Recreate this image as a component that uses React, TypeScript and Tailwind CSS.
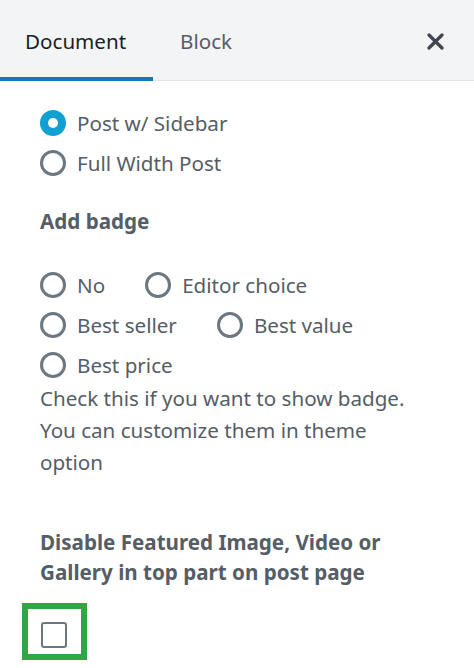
import React, { useState } from "react";

const font = { fontFamily: '"Noto Sans", "Open Sans", sans-serif' };

type RadioProps = {
    label: string;
    checked?: boolean;
    onSelect: () => void;
};

const Radio: React.FC<RadioProps> = ({ label, checked, onSelect }) => (
    <button type="button" onClick={onSelect} className="flex items-center h-10 mr-[40px] text-left">
        {checked ? (
            <span className="w-[26px] h-[26px] rounded-full bg-[#11a0d2] flex items-center justify-center shrink-0">
                <span className="w-[10px] h-[10px] rounded-full bg-white" />
            </span>
        ) : (
            <span className="w-[26px] h-[26px] rounded-full border-[3px] border-[#6c7781] shrink-0" />
        )}
        <span className="ml-[11px] text-[20.6px] text-[#555d66]">{label}</span>
    </button>
);

export default function App() {
    const [tab, setTab] = useState<"document" | "block">("document");
    const [layout, setLayout] = useState("sidebar");
    const [badge, setBadge] = useState("");
    const [disabled, setDisabled] = useState(false);

    return (
        <div className="w-[474px] h-[668px] bg-white overflow-hidden" style={font}>
            <div className="flex items-stretch h-[81px] bg-[#f3f4f5] border-b border-[#e2e4e7]">
                <button
                    type="button"
                    onClick={() => setTab("document")}
                    className={`w-[153px] pl-[25px] pt-[5px] text-left text-[20.6px] border-b-4 -mb-px ${
                        tab === "document" ? "border-[#0e7bb8] text-[#191e23]" : "border-transparent text-[#555d66]"
                    }`}
                >
                    Document
                </button>
                <button
                    type="button"
                    onClick={() => setTab("block")}
                    className={`px-[27px] pt-[5px] text-[20.6px] border-b-4 -mb-px ${
                        tab === "block" ? "border-[#0e7bb8] text-[#191e23]" : "border-transparent text-[#555d66]"
                    }`}
                >
                    Block
                </button>
                <div className="flex-1" />
                <button type="button" className="w-[78px] flex items-center justify-center pt-[2px]">
                    <svg width="17" height="17" viewBox="0 0 17 17" fill="none" stroke="#40464d" strokeWidth="3.2" strokeLinecap="round">
                        <path d="M2 2 15 15M15 2 2 15" />
                    </svg>
                </button>
            </div>

            <div className="pl-[40px] w-[420px] pt-[22px]">
                <Radio label="Post w/ Sidebar" checked={layout === "sidebar"} onSelect={() => setLayout("sidebar")} />
                <Radio label="Full Width Post" checked={layout === "full"} onSelect={() => setLayout("full")} />

                <div className="mt-[23px] h-[30px] leading-[30px] text-[20.6px] font-bold text-[#555d66]">Add badge</div>

                <div className="mt-[29px] flex flex-wrap">
                    <Radio label="No" checked={badge === "no"} onSelect={() => setBadge("no")} />
                    <Radio label="Editor choice" checked={badge === "editor"} onSelect={() => setBadge("editor")} />
                </div>
                <div className="flex flex-wrap">
                    <Radio label="Best seller" checked={badge === "seller"} onSelect={() => setBadge("seller")} />
                    <Radio label="Best value" checked={badge === "value"} onSelect={() => setBadge("value")} />
                </div>
                <Radio label="Best price" checked={badge === "price"} onSelect={() => setBadge("price")} />

                <p className="-mt-[3px] text-[20.6px] leading-[32px] text-[#555d66]">
                    Check this if you want to show badge. You can customize them in theme option
                </p>

                <div className="mt-[49px] text-[20.6px] leading-[30px] font-bold text-[#555d66]">
                    Disable Featured Image, Video or Gallery in top part on post page
                </div>
            </div>

            <div className="ml-[22px] mt-[16px] w-[65px] h-[57px] border-[6px] border-[#2ea745] pl-[13px] pt-[13px]">
                <button
                    type="button"
                    onClick={() => setDisabled(!disabled)}
                    className="block w-[26px] h-[26px] rounded-[3px] border-2 border-[#6c7781]"
                />
            </div>
        </div>
    );
}
